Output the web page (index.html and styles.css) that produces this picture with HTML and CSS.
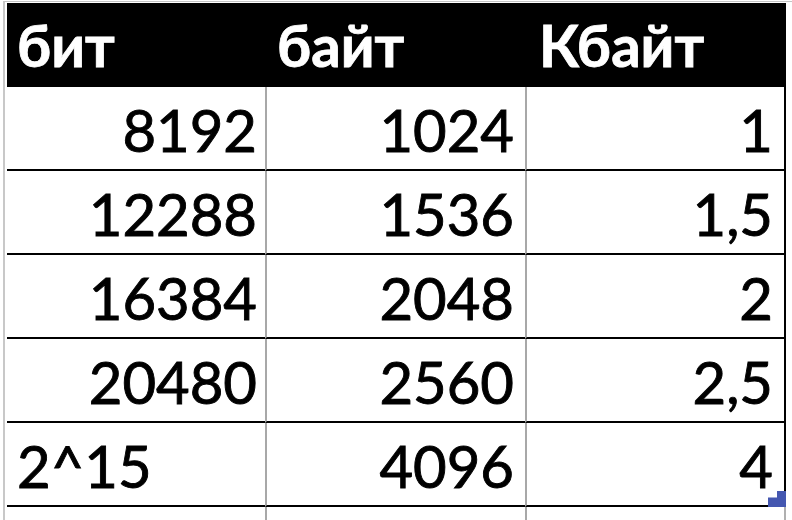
FILE: index.html
```html
<!DOCTYPE html>
<html lang="ru">
<head>
<meta charset="utf-8">
<title>бит байт Кбайт</title>
<link rel="stylesheet" href="styles.css">
</head>
<body>
<div class="sheet">
  <div class="grid">
    <div class="cell head">бит</div>
    <div class="cell head">байт</div>
    <div class="cell head">Кбайт</div>

    <div class="cell c1">8192</div>
    <div class="cell c2">1024</div>
    <div class="cell c3">1</div>

    <div class="cell c1">12288</div>
    <div class="cell c2">1536</div>
    <div class="cell c3">1,5</div>

    <div class="cell c1">16384</div>
    <div class="cell c2">2048</div>
    <div class="cell c3">2</div>

    <div class="cell c1">20480</div>
    <div class="cell c2">2560</div>
    <div class="cell c3">2,5</div>

    <div class="cell c1 left">2^15</div>
    <div class="cell c2">4096</div>
    <div class="cell c3 last">4<span class="handle"></span></div>

    <div class="cell e1"></div>
    <div class="cell e2"></div>
    <div class="cell e3"></div>
  </div>
</div>
</body>
</html>
```
FILE: styles.css
```css
html, body {
  margin: 0;
  padding: 0;
  background: #ffffff;
}
body {
  width: 792px;
  height: 520px;
  overflow: hidden;
  font-family: "Lato", "Open Sans", sans-serif;
  color: #000;
}
.sheet {
  border-top: 1px solid #c4c4c4;
  margin-top: 1px;
  margin-left: 3px;
  border-left: 2px solid #c8c8c8;
  height: 520px;
  padding: 1px 0 0 2px;
  box-sizing: border-box;
}
.grid {
  display: grid;
  grid-template-columns: 258px 260px 261px;
  grid-template-rows: 84px repeat(5, 84px) 20px;
}
.cell {
  font-size: 58px;
  line-height: 82px;
  text-align: right;
  box-sizing: border-box;
  border-bottom: 2px solid #000;
  padding-top: 2px;
  white-space: nowrap;
  -webkit-text-stroke: 0.9px #000;
}
.head {
  background: #000;
  color: #fff;
  font-weight: 700;
  text-align: left;
  line-height: 84px;
  padding: 0 0 0 10px;
  border-bottom: none;
  -webkit-text-stroke: 0.8px #fff;
}
.head:nth-child(2) { padding-left: 12px; }
.head:nth-child(3) { padding-left: 14px; }
.c1 { padding-right: 8px; }
.c2 { padding-right: 11px; border-left: 2px solid #a8a8a8; }
.c3 { padding-right: 11px; border-left: 2px solid #a8a8a8; border-right: 2px solid #000; }
.left { text-align: left; padding-left: 10px; }
.last { position: relative; }
.handle {
  position: absolute;
  right: -2px;
  bottom: -2px;
  width: 18px;
  height: 16px;
  background: #4457b0;
  clip-path: polygon(50% 0, 100% 0, 100% 100%, 0 100%, 0 40%, 50% 40%);
}
.e1, .e2, .e3 { border-bottom: none; }
.e2, .e3 { border-left: 2px solid #a8a8a8; }
.e3 { border-right: 2px solid #b0b0b0; }
```
